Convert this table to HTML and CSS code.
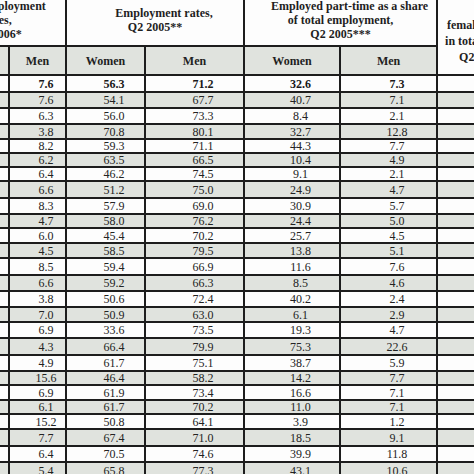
FILE: index.html
```html
<!DOCTYPE html>
<html lang="en">
<head>
<meta charset="utf-8">
<title>Employment table</title>
<link rel="stylesheet" href="styles.css">
</head>
<body>
<div class="frame">
<table class="stats">
  <colgroup>
    <col class="c-uw"><col class="c-um"><col class="c-ew"><col class="c-em"><col class="c-pw"><col class="c-pm"><col class="c-fs">
  </colgroup>
  <thead>
    <tr class="head1">
      <th colspan="2" class="grp"><span class="first">Unemployment</span><br>rates,<br>Q2 2006*</th>
      <th colspan="2" class="grp"><span class="first">Employment rates,</span><br>Q2 2005**</th>
      <th colspan="2" class="grp"><span class="first">Employed part-time as a share</span><br>of total employment,<br>Q2 2005***</th>
      <th rowspan="2" class="share"><div class="sl1">female employment</div><div class="sl2">in total employment,</div><div class="sl3">Q2 2005</div></th>
    </tr>
    <tr class="head2">
      <th class="sub">Women</th>
      <th class="sub s-um">Men</th>
      <th class="sub s-ew">Women</th>
      <th class="sub s-em">Men</th>
      <th class="sub s-pw">Women</th>
      <th class="sub s-pm">Men</th>
    </tr>
  </thead>
  <tbody>
    <tr class="h17 w bold"><td></td><td>7.6</td><td>56.3</td><td>71.2</td><td>32.6</td><td>7.3</td><td></td></tr>
    <tr class="h16 g"><td></td><td>7.6</td><td>54.1</td><td>67.7</td><td>40.7</td><td>7.1</td><td></td></tr>
    <tr class="h16 w"><td></td><td>6.3</td><td>56.0</td><td>73.3</td><td>8.4</td><td>2.1</td><td></td></tr>
    <tr class="h15 g"><td></td><td>3.8</td><td>70.8</td><td>80.1</td><td>32.7</td><td>12.8</td><td></td></tr>
    <tr class="h14 w"><td></td><td>8.2</td><td>59.3</td><td>71.1</td><td>44.3</td><td>7.7</td><td></td></tr>
    <tr class="h14 g"><td></td><td>6.2</td><td>63.5</td><td>66.5</td><td>10.4</td><td>4.9</td><td></td></tr>
    <tr class="h14 w"><td></td><td>6.4</td><td>46.2</td><td>74.5</td><td>9.1</td><td>2.1</td><td></td></tr>
    <tr class="h17 g"><td></td><td>6.6</td><td>51.2</td><td>75.0</td><td>24.9</td><td>4.7</td><td></td></tr>
    <tr class="h16 w"><td></td><td>8.3</td><td>57.9</td><td>69.0</td><td>30.9</td><td>5.7</td><td></td></tr>
    <tr class="h14 g"><td></td><td>4.7</td><td>58.0</td><td>76.2</td><td>24.4</td><td>5.0</td><td></td></tr>
    <tr class="h15 w"><td></td><td>6.0</td><td>45.4</td><td>70.2</td><td>25.7</td><td>4.5</td><td></td></tr>
    <tr class="h15 g"><td></td><td>4.5</td><td>58.5</td><td>79.5</td><td>13.8</td><td>5.1</td><td></td></tr>
    <tr class="h17 w"><td></td><td>8.5</td><td>59.4</td><td>66.9</td><td>11.6</td><td>7.6</td><td></td></tr>
    <tr class="h16 g"><td></td><td>6.6</td><td>59.2</td><td>66.3</td><td>8.5</td><td>4.6</td><td></td></tr>
    <tr class="h16 w"><td></td><td>3.8</td><td>50.6</td><td>72.4</td><td>40.2</td><td>2.4</td><td></td></tr>
    <tr class="h15 g"><td></td><td>7.0</td><td>50.9</td><td>63.0</td><td>6.1</td><td>2.9</td><td></td></tr>
    <tr class="h16 w"><td></td><td>6.9</td><td>33.6</td><td>73.5</td><td>19.3</td><td>4.7</td><td></td></tr>
    <tr class="h17 g"><td></td><td>4.3</td><td>66.4</td><td>79.9</td><td>75.3</td><td>22.6</td><td></td></tr>
    <tr class="h16 w"><td></td><td>4.9</td><td>61.7</td><td>75.1</td><td>38.7</td><td>5.9</td><td></td></tr>
    <tr class="h13 g"><td></td><td>15.6</td><td>46.4</td><td>58.2</td><td>14.2</td><td>7.7</td><td></td></tr>
    <tr class="h15 w"><td></td><td>6.9</td><td>61.9</td><td>73.4</td><td>16.6</td><td>7.1</td><td></td></tr>
    <tr class="h12 g"><td></td><td>6.1</td><td>61.7</td><td>70.2</td><td>11.0</td><td>7.1</td><td></td></tr>
    <tr class="h15 w"><td></td><td>15.2</td><td>50.8</td><td>64.1</td><td>3.9</td><td>1.2</td><td></td></tr>
    <tr class="h17 g"><td></td><td>7.7</td><td>67.4</td><td>71.0</td><td>18.5</td><td>9.1</td><td></td></tr>
    <tr class="h16 w"><td></td><td>6.4</td><td>70.5</td><td>74.6</td><td>39.9</td><td>11.8</td><td></td></tr>
    <tr class="h18 g"><td></td><td>5.4</td><td>65.8</td><td>77.3</td><td>43.1</td><td>10.6</td><td></td></tr>
  </tbody>
</table>
</div>
</body>
</html>
```

FILE: styles.css
```css
html, body {
  margin: 0;
  padding: 0;
  background: #fdfdfd;
}

.frame {
  width: 474px;
  height: 474px;
  overflow: hidden;
}

.stats {
  border-collapse: collapse;
  table-layout: fixed;
  width: 628px;
  margin-left: -72px;
  margin-top: -7px;
  font-family: "Liberation Serif", "Times New Roman", serif;
  font-size: 12px;
  color: #232323;
}

.c-uw { width: 80px; }
.c-um { width: 57px; }
.c-ew { width: 79px; }
.c-em { width: 99px; }
.c-pw { width: 96px; }
.c-pm { width: 97px; }
.c-fs { width: 120px; }

.stats th,
.stats td {
  border: 2px solid #1d1d1d;
  padding: 0;
  text-align: center;
  vertical-align: middle;
  white-space: nowrap;
}

.stats td {
  overflow: hidden;
}

.stats th {
  font-weight: bold;
  color: #1f1f1f;
  line-height: 14px;
}

.head1 { height: 52px; }
.head1 th { background: #fdfdfd; }

.first {
  display: inline-block;
  margin-left: 18px;
}

.stats th.share {
  background: #fdfdfd;
  line-height: 16px;
  vertical-align: top;
  text-align: left;
  padding: 22px 0 0 7px;
}

.sl1 { padding-left: 2px; }
.sl3 { padding-left: 14px; }

.head2 { height: 29px; }
.head2 th { background: #e0e3de; }

.s-um { padding-left: 0; }
.s-ew { padding-left: 10px; }
.s-em { padding-right: 26px; }
.s-pw { padding-left: 17px; }
.s-pm { padding-left: 18px; }

.stats td {
  line-height: 12px;
  padding-left: 17px;
}

.w td { background: #fdfdfd; }
.g td { background: #e0e3de; }
.bold td { font-weight: bold; color: #1a1a1a; }

.h12 { height: 12px; }
.h13 { height: 13px; }
.h14 { height: 14px; }
.h15 { height: 15px; }
.h16 { height: 16px; }
.h17 { height: 17px; }
.h18 { height: 18px; }
```
